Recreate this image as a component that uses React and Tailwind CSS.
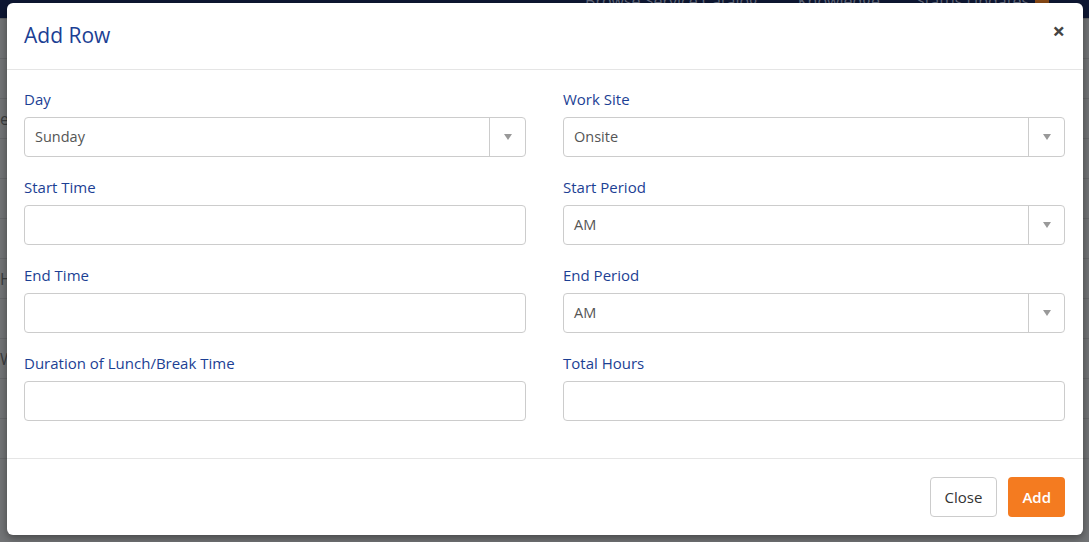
import React from 'react'

const font = { fontFamily: '"Open Sans", "Noto Sans", sans-serif' }

function SelectBox({ value }) {
  return (
    <div className="flex h-10 items-stretch rounded-[4px] border border-[#cccccc] bg-white">
      <div className="flex flex-1 items-center px-[10px] text-[14.5px] text-[#555555]">{value}</div>
      <div className="flex w-[36px] items-center justify-center border-l border-[#cccccc]">
        <svg width="8" height="6" viewBox="0 0 8 6">
          <path d="M0 0 L8 0 L4 6 Z" fill="#999999" />
        </svg>
      </div>
    </div>
  )
}

function TextBox() {
  return <div className="h-10 rounded-[4px] border border-[#cccccc] bg-white" />
}

function Field({ label, children }) {
  return (
    <div className="mb-[21px]">
      <div className="mb-[7px] h-5 text-[15px] leading-[18px] text-[#1c3f94]">{label}</div>
      {children}
    </div>
  )
}

function Background() {
  return (
    <div className="absolute inset-0 bg-[#727476]">
      <div className="flex h-[34px] items-center justify-end bg-[#0e1733] pr-[40px] text-[16px] text-[#646b7e] -mt-[16px]">
        <span>Browse Service Catalog</span>
        <span className="ml-[40px]">Knowledge</span>
        <span className="ml-[36px] flex items-center gap-[6px]">
          Status Updates
          <span className="inline-block h-4 w-[14px] rounded-sm bg-[#8a4a16]" />
        </span>
      </div>
      <div className="border-t border-[#606264]">
        {['', '', 'e', '', '', '', 'H', '', 'W', '', ''].map((t, i) => (
          <div key={i} className="flex h-[40px] items-center border-b border-[#66686a] text-[16px] text-[#3a3c3e]">
            {t}
          </div>
        ))}
      </div>
    </div>
  )
}

export default function App() {
  return (
    <div className="relative h-[542px] w-full overflow-hidden" style={font}>
      <Background />
      <div className="absolute left-[7px] top-[3px] w-[1076px] rounded-[6px] bg-white shadow-[0_3px_9px_rgba(0,0,0,0.4)]">
        <div className="flex h-[67px] items-center justify-between border-b border-[#e5e5e5] pl-[17px] pr-[18px]">
          <h4 className="text-[21px] text-[#1c3f94]">Add Row</h4>
          <span className="-mt-[12px] text-[22px] font-bold leading-none text-[#444444]">×</span>
        </div>
        <div className="grid grid-cols-2 gap-x-[37px] pl-[17px] pr-[18px] pt-[20px] pb-[16px]">
          <Field label="Day">
            <SelectBox value="Sunday" />
          </Field>
          <Field label="Work Site">
            <SelectBox value="Onsite" />
          </Field>
          <Field label="Start Time">
            <TextBox />
          </Field>
          <Field label="Start Period">
            <SelectBox value="AM" />
          </Field>
          <Field label="End Time">
            <TextBox />
          </Field>
          <Field label="End Period">
            <SelectBox value="AM" />
          </Field>
          <Field label="Duration of Lunch/Break Time">
            <TextBox />
          </Field>
          <Field label="Total Hours">
            <TextBox />
          </Field>
        </div>
        <div className="flex justify-end gap-[11px] border-t border-[#e5e5e5] py-[18px] pr-[18px]">
          <button className="h-10 rounded-[4px] border border-[#cccccc] bg-white px-[14px] text-[15px] text-[#333333]">
            Close
          </button>
          <button className="h-10 rounded-[4px] bg-[#f47b20] px-[14px] text-[15px] font-semibold text-white">
            Add
          </button>
        </div>
      </div>
    </div>
  )
}
